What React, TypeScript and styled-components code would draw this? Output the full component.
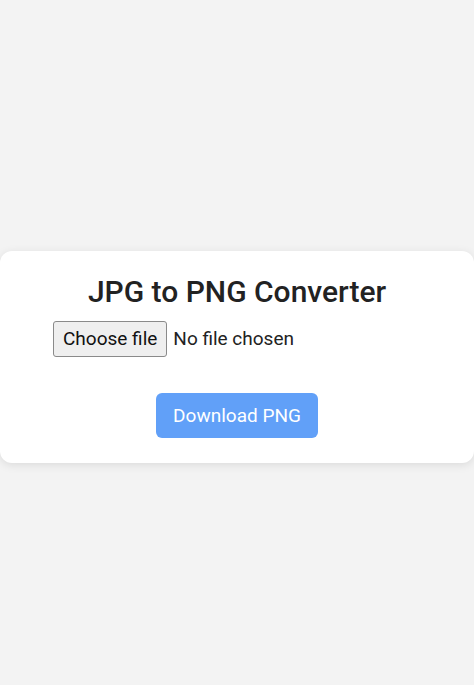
import React, { useState } from 'react';
import styled, { createGlobalStyle } from 'styled-components';

const GlobalStyle = createGlobalStyle`
  html, body {
    margin: 0;
    padding: 0;
    background: #f3f3f3;
    font-family: Roboto, "Liberation Sans", Arial, sans-serif;
  }
  * {
    box-sizing: border-box;
  }
`;

const Page = styled.div`
  min-height: 100vh;
  display: flex;
  align-items: center;
  justify-content: center;
  padding-top: 28px;
`;

const Card = styled.div`
  width: 474px;
  background: #ffffff;
  border-radius: 12px;
  box-shadow: 0 2px 10px rgba(0, 0, 0, 0.1);
  padding: 23px 0 25px;
  display: flex;
  flex-direction: column;
  align-items: center;
`;

const Title = styled.h1`
  margin: 0;
  font-size: 30px;
  line-height: 36px;
  font-weight: 500;
  color: #222222;
  text-align: center;
`;

const Content = styled.div`
  width: 368px;
  display: flex;
  flex-direction: column;
  margin-top: 11px;
`;

const Picker = styled.label`
  display: flex;
  align-items: center;
  gap: 6px;
  font-size: 19px;
  line-height: 23px;
  color: #222222;
  cursor: pointer;
`;

const HiddenInput = styled.input`
  display: none;
`;

const PickerButton = styled.span`
  display: inline-flex;
  align-items: center;
  height: 36px;
  padding: 0 9px;
  background: #efefef;
  color: #111111;
  border: 1px solid #8a8a8a;
  border-radius: 3px;
`;

const FileName = styled.span`
  white-space: nowrap;
`;

const DownloadButton = styled.button<{ ready: boolean }>`
  align-self: center;
  margin-top: 36px;
  padding: 11px 17px;
  font-family: Roboto, "Liberation Sans", Arial, sans-serif;
  font-size: 19px;
  line-height: 23px;
  color: #ffffff;
  background: ${props => (props.ready ? '#3b82f6' : '#61a0f8')};
  border: none;
  border-radius: 6px;
  cursor: ${props => (props.ready ? 'pointer' : 'not-allowed')};
`;

const App: React.FC = () => {
  const [file, setFile] = useState<File | null>(null);

  const handleDownload = () => {
    if (!file) return;
    const img = new Image();
    img.onload = () => {
      const canvas = document.createElement('canvas');
      canvas.width = img.width;
      canvas.height = img.height;
      canvas.getContext('2d')?.drawImage(img, 0, 0);
      const link = document.createElement('a');
      link.href = canvas.toDataURL('image/png');
      link.download = file.name.replace(/\.jpe?g$/i, '') + '.png';
      link.click();
    };
    img.src = URL.createObjectURL(file);
  };

  return (
    <>
      <GlobalStyle />
      <Page>
        <Card>
          <Title>JPG to PNG Converter</Title>
          <Content>
            <Picker>
              <HiddenInput
                type="file"
                accept="image/jpeg"
                onChange={e => setFile(e.target.files?.[0] ?? null)}
              />
              <PickerButton>Choose file</PickerButton>
              <FileName>{file ? file.name : 'No file chosen'}</FileName>
            </Picker>
            <DownloadButton ready={!!file} onClick={handleDownload}>
              Download PNG
            </DownloadButton>
          </Content>
        </Card>
      </Page>
    </>
  );
};

export default App;
